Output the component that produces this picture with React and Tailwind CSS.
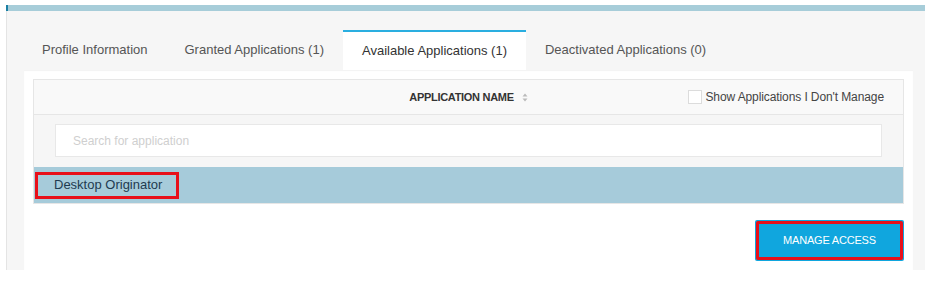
export default function App() {
  const font = { fontFamily: '"Liberation Sans", Arial, sans-serif' };
  return (
    <div className="w-[936px] h-[293px] bg-white pt-[5px] pl-[6px]" style={font}>
      <div className="w-[919px] flex flex-col">
        <div className="h-[6px] bg-[#a7cdd9] flex">
          <div className="w-[2px] h-full bg-[#1a7fa3]" />
        </div>
        <div className="h-[259px] bg-[#f6f6f6] border-l border-[#e4e4e4] pt-[19px] pl-[17px] pr-[12px] flex flex-col">
          <div className="h-[40px] flex text-[13px] text-[#555]">
            <div className="px-[18px] flex items-center">Profile Information</div>
            <div className="px-[19px] flex items-center">Granted Applications (1)</div>
            <div className="px-[19px] flex items-center bg-white border-t-2 border-[#2aaee0] text-[#333]">Available Applications (1)</div>
            <div className="px-[19px] flex items-center">Deactivated Applications (0)</div>
          </div>
          <div className="flex-1 bg-white pt-[9px] px-[9px] flex flex-col shadow-[inset_0_1px_1px_rgba(0,0,0,0.05)]">
            <div className="border border-[#e6e6e6]">
              <div className="h-[35px] bg-[#f9f9f9] border-b border-[#e6e6e6] relative flex items-center justify-center">
                <span className="text-[11px] font-bold text-[#333] tracking-[-0.3px]">APPLICATION NAME</span>
                <svg width="6" height="9" viewBox="0 0 6 9" className="ml-[8px]">
                  <path d="M3 0.5 L5.5 3.5 H0.5 Z" fill="#bbb" />
                  <path d="M3 8.5 L5.5 5.5 H0.5 Z" fill="#bbb" />
                </svg>
                <div className="absolute right-[19px] top-0 h-full flex items-center">
                  <div className="w-[14px] h-[14px] bg-white border border-[#dcdcdc] mr-[3px]" />
                  <span className="text-[12px] text-[#444] tracking-[-0.1px]">Show Applications I Don't Manage</span>
                </div>
              </div>
              <div className="h-[52px] bg-[#f6f6f6] px-[21px] py-[9px]">
                <div className="h-[33px] bg-white border border-[#e8e8e8] flex items-center pl-[17px] text-[12px] text-[#cfcfcf]">
                  Search for application
                </div>
              </div>
              <div className="h-[36px] bg-[#a6cbda] flex items-center pl-[1px]">
                <div className="h-[27px] w-[144px] border-[3px] border-[#e8101a] flex items-center pl-[16px] text-[13px] text-[#1f3b50]">
                  Desktop Originator
                </div>
              </div>
            </div>
            <div className="flex justify-end mt-[16px]">
              <div className="w-[149px] h-[41px] bg-[#10a6de] rounded-[2px] p-[1px]">
                <div className="w-full h-full border-[3px] border-[#e8101a] rounded-[2px] flex items-center justify-center text-[11px] text-white tracking-[-0.2px]">
                  MANAGE ACCESS
                </div>
              </div>
            </div>
          </div>
        </div>
      </div>
    </div>
  );
}
